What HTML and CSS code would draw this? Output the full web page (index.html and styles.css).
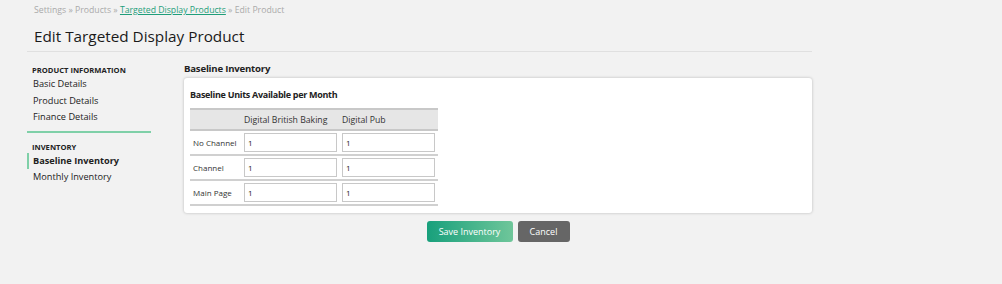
FILE: index.html
```html
<!DOCTYPE html>
<html>
<head>
	<title>Edit Targeted Display Product</title>
	<meta charset="utf-8">
	<link rel="stylesheet" href="styles.css">
</head>
<body>
<div class="page">
	<div class="crumbs">
		<span>Settings</span> &raquo; <span>Products</span> &raquo;
		<a href="#">Targeted Display Products</a> &raquo; <span>Edit Product</span>
	</div>
	<h1 class="title">Edit Targeted Display Product</h1>

	<div class="layout">
		<div class="side">
			<div class="side-group">
				<div class="side-head">PRODUCT INFORMATION</div>
				<a class="side-link" href="#">Basic Details</a>
				<a class="side-link" href="#">Product Details</a>
				<a class="side-link" href="#">Finance Details</a>
			</div>
			<div class="side-group">
				<div class="side-head">INVENTORY</div>
				<a class="side-link active" href="#">Baseline Inventory</a>
				<a class="side-link" href="#">Monthly Inventory</a>
			</div>
		</div>

		<div class="main">
			<h2 class="section">Baseline Inventory</h2>
			<div class="card">
				<h3 class="card-title">Baseline Units Available per Month</h3>
				<table class="inv">
					<thead>
						<tr>
							<th></th>
							<th>Digital British Baking</th>
							<th>Digital Pub</th>
						</tr>
					</thead>
					<tbody>
						<tr>
							<td class="lbl">No Channel</td>
							<td><input type="text" value="1"></td>
							<td><input type="text" value="1"></td>
						</tr>
						<tr>
							<td class="lbl">Channel</td>
							<td><input type="text" value="1"></td>
							<td><input type="text" value="1"></td>
						</tr>
						<tr>
							<td class="lbl">Main Page</td>
							<td><input type="text" value="1"></td>
							<td><input type="text" value="1"></td>
						</tr>
					</tbody>
				</table>
			</div>
			<div class="actions">
				<button class="btn btn-save">Save Inventory</button>
				<button class="btn btn-cancel">Cancel</button>
			</div>
		</div>
	</div>
</div>
</body>
</html>
```

FILE: styles.css
```css
body{
	margin: 0;
	background-color: #f2f2f2;
	font-family: "Open Sans", "Liberation Sans", sans-serif;
	color: #222;
}
.page{
	margin-left: 27px;
	width: 785px;
}
.crumbs{
	padding: 4px 0 0 7px;
	height: 13px;
	line-height: 13px;
	font-size: 8.7px;
	color: #aaa;
}
.crumbs a{
	color: #1f9e7a;
	text-decoration: underline;
}
.title{
	margin: 0;
	padding: 8px 0 4px 7px;
	font-size: 15.3px;
	line-height: 22px;
	font-weight: 400;
	color: #1a1a1a;
	border-bottom: 1px solid #e0e0e0;
}

.layout{
	display: flex;
	gap: 33px;
}
.side{
	width: 124px;
	padding-top: 12px;
}
.side-group{
	padding-bottom: 5px;
}
.side-group + .side-group{
	border-top: 2px solid #7fd0a8;
	padding-top: 8px;
}
.side-head{
	padding-left: 5px;
	font-size: 7.6px;
	font-weight: 700;
	line-height: 12px;
	color: #222;
}
.side-link{
	display: block;
	padding-left: 6px;
	font-size: 9.2px;
	line-height: 16.5px;
	color: #222;
	text-decoration: none;
}
.side-link.active{
	font-weight: 700;
	border-left: 2px solid #7fd0a8;
	padding-left: 4px;
}

.main{
	flex: 1;
	padding-top: 10px;
}
.section{
	margin: 0;
	font-size: 9.6px;
	line-height: 14px;
	font-weight: 700;
	letter-spacing: -0.2px;
	color: #222;
}
.card{
	margin-top: 2px;
	background-color: #fff;
	border-radius: 3px;
	box-shadow: 0 0 3px rgba(0,0,0,.25);
	padding: 10px 6px 7px;
}
.card-title{
	margin: 0 0 6px;
	font-size: 9px;
	line-height: 14px;
	font-weight: 700;
	letter-spacing: -0.3px;
	color: #222;
}
.inv{
	border-collapse: collapse;
	font-size: 8.7px;
	color: #333;
}
.inv th{
	height: 19px;
	background-color: #e6e6e6;
	border-top: 2px solid #c8c8c8;
	border-bottom: 2px solid #c8c8c8;
	font-weight: 400;
	text-align: left;
	padding: 0 4px 0 2px;
}
.inv td{
	height: 23px;
	padding: 0 3px 0 2px;
	border-bottom: 2px solid #d0d0d0;
}
.inv td.lbl{
	width: 46px;
	padding-left: 3px;
	font-size: 8px;
}
.inv input{
	display: block;
	box-sizing: border-box;
	width: 93px;
	height: 19px;
	border: 1px solid #c8c8c8;
	padding: 0 3px;
	font: 8px "Open Sans", "Liberation Sans", sans-serif;
	color: #222;
}

.actions{
	display: flex;
	justify-content: center;
	gap: 5px;
	margin-top: 8px;
}
.btn{
	height: 21px;
	border: 0;
	border-radius: 3px;
	font: 9px "Open Sans", "Liberation Sans", sans-serif;
	color: #fff;
	cursor: pointer;
}
.btn-save{
	width: 86px;
	background: linear-gradient(to right, #18a07c, #6fc69a);
}
.btn-cancel{
	width: 52px;
	background-color: #666;
}
```
